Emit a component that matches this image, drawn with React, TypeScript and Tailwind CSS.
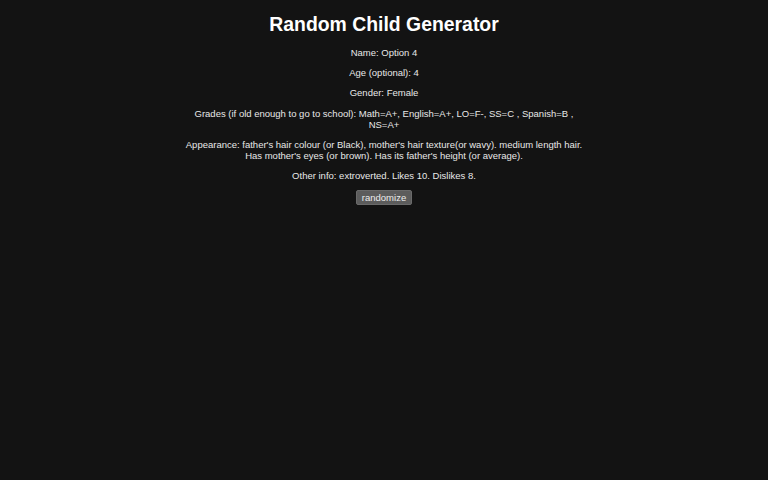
import React, { useState } from 'react';

const pick = <T,>(list: T[]): T => list[Math.floor(Math.random() * list.length)];

const App: React.FC = () => {
    const [child] = useState({
        name: 'Option 4',
        age: 4,
        gender: 'Female',
        grades: 'Math=A+, English=A+, LO=F-, SS=C , Spanish=B , NS=A+',
        appearance:
            "father's hair colour (or Black), mother's hair texture(or wavy). medium length hair. Has mother's eyes (or brown). Has its father's height (or average).",
        other: 'extroverted. Likes 10. Dislikes 8.',
    });

    return (
        <div className="min-h-screen w-full bg-[#131313] text-[#e8e8e8] font-['Liberation_Sans',Arial,sans-serif] flex flex-col items-center">
            <h1 className="text-[19.4px] font-bold text-white mt-[12px] mb-[11px] leading-[24px]">Random Child Generator</h1>
            <div className="w-[400px] text-center text-[9.5px] leading-[11px] flex flex-col gap-[9.2px]">
                <p>Name: {child.name}</p>
                <p>Age (optional): {child.age}</p>
                <p>Gender: {child.gender}</p>
                <p>Grades (if old enough to go to school): {child.grades}</p>
                <p>Appearance: {child.appearance}</p>
                <p>Other info: {child.other}</p>
                <div>
                    <button
                        onClick={() => pick([0])}
                        className="bg-[#5c5c5c] text-[#ececec] text-[9.5px] leading-[11px] px-[5px] py-[1px] rounded-[2px] border border-[#6a6a6a]"
                    >
                        randomize
                    </button>
                </div>
            </div>
        </div>
    );
};

export default App;
